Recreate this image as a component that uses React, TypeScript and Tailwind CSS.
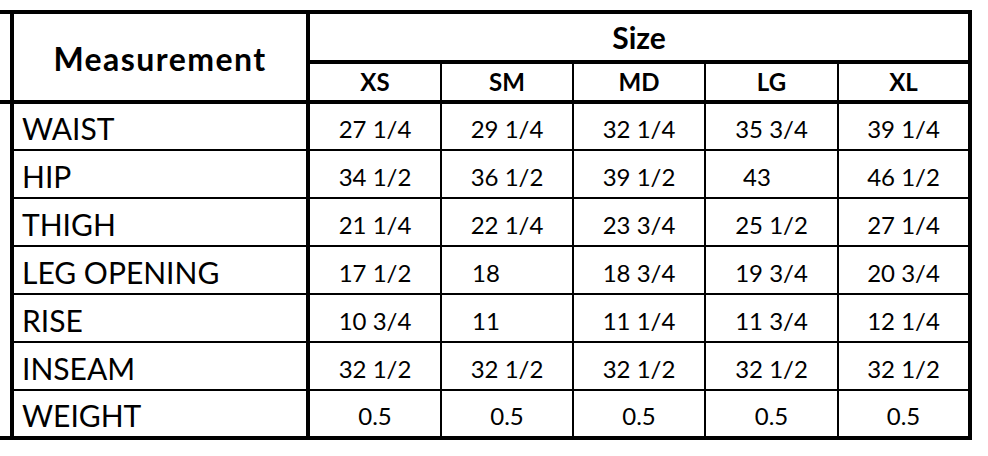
import React from "react";

const sizes = ["XS", "SM", "MD", "LG", "XL"];

const rows = [
  { label: "WAIST", values: ["27 1/4", "29 1/4", "32 1/4", "35 3/4", "39 1/4"] },
  { label: "HIP", values: ["34 1/2", "36 1/2", "39 1/2", "43", "46 1/2"] },
  { label: "THIGH", values: ["21 1/4", "22 1/4", "23 3/4", "25 1/2", "27 1/4"] },
  { label: "LEG OPENING", values: ["17 1/2", "18", "18 3/4", "19 3/4", "20 3/4"] },
  { label: "RISE", values: ["10 3/4", "11", "11 1/4", "11 3/4", "12 1/4"] },
  { label: "INSEAM", values: ["32 1/2", "32 1/2", "32 1/2", "32 1/2", "32 1/2"] },
  { label: "WEIGHT", values: ["0.5", "0.5", "0.5", "0.5", "0.5"] },
];

// whole numbers sit left in their cell in the sheet
const leftPad: Record<string, string> = {
  "18": "text-left pl-[30px]",
  "11": "text-left pl-[30px]",
  "43": "text-left pl-[37px]",
};

const App = () => {
  return (
    <div className="w-[988px] h-[456px] bg-white pt-[10px] font-['Lato',sans-serif] text-black">
      <table className="table-fixed border-collapse w-[970px]">
        <colgroup>
          <col className="w-[12px]" />
          <col className="w-[296px]" />
          <col className="w-[133px]" />
          <col className="w-[132px]" />
          <col className="w-[132px]" />
          <col className="w-[133px]" />
          <col className="w-[132px]" />
        </colgroup>
        <thead>
          <tr className="h-[50px]">
            <th rowSpan={2} className="border-t-4 border-b-4 border-black p-0" />
            <th
              rowSpan={2}
              className="border-4 border-black text-[32px] tracking-[0.045em] font-bold leading-none p-0 pt-[4px]"
            >
              Measurement
            </th>
            <th
              colSpan={5}
              className="border-4 border-black text-[30px] font-bold leading-none p-0"
            >
              Size
            </th>
          </tr>
          <tr className="h-[40px]">
            {sizes.map((s, i) => (
              <th
                key={s}
                className={`border-b-4 border-black text-[24px] font-bold leading-none p-0 ${
                  i < sizes.length - 1 ? "border-r-2" : "border-r-4"
                }`}
              >
                {s}
              </th>
            ))}
          </tr>
        </thead>
        <tbody>
          {rows.map((row, ri) => (
            <tr key={row.label} className="h-[48px]">
              {ri === 0 && (
                <td rowSpan={rows.length} className="border-b-4 border-black p-0" />
              )}
              <td
                className={`border-l-4 border-r-4 border-black text-[30px] leading-none pl-[8px] pt-[3px] ${
                  ri === rows.length - 1 ? "border-b-4" : "border-b-2"
                }`}
              >
                {row.label}
              </td>
              {row.values.map((v, vi) => (
                <td
                  key={vi}
                  className={`border-black text-[24px] leading-none pt-[5px] ${
                    leftPad[v] ?? "text-center"
                  } ${vi < row.values.length - 1 ? "border-r-2" : "border-r-4"} ${
                    ri === rows.length - 1 ? "border-b-4" : "border-b-2"
                  }`}
                >
                  {v}
                </td>
              ))}
            </tr>
          ))}
        </tbody>
      </table>
    </div>
  );
};

export default App;
